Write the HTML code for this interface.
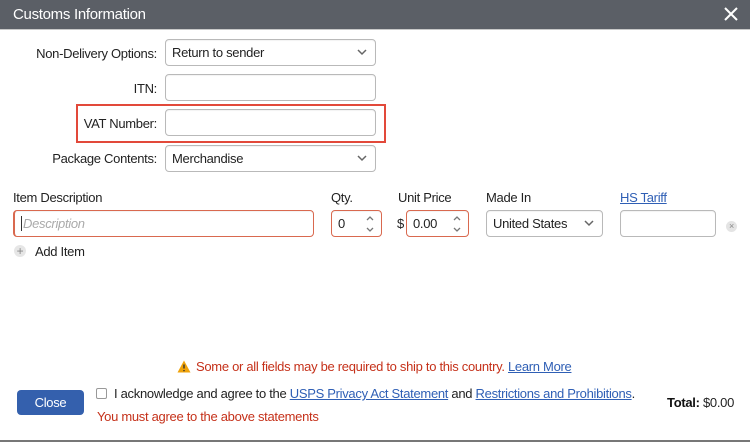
<!DOCTYPE html>
<html><head><style>
*{box-sizing:border-box;margin:0;padding:0}
body{width:750px;height:442px;background:#fff;font-family:"Liberation Sans",sans-serif;color:#222;position:relative;overflow:hidden;font-size:13px;letter-spacing:-0.3px}
.a{position:absolute;white-space:nowrap}
.hdr{left:0;top:0;width:750px;height:30px;background:#5b5f66;border-bottom:1px solid #c8c8c8}
.in{position:absolute;border:1px solid #b9b9b9;border-radius:4px;background:#fff;height:27px;font-size:13px;line-height:25px;padding-left:6px;box-shadow:inset 0 1px 1px rgba(0,0,0,.05)}
.err{border-color:#d9694f}
.lbl{position:absolute;text-align:right;width:157px;left:0;font-size:13px}
.chev{position:absolute;right:8px;top:9px}
.link{color:#2f5fb5;text-decoration:underline}
.red{color:#c5311a}
</style></head><body>
<div class="a hdr"></div>
<div class="a" style="left:13px;top:6px;color:#fff;font-size:15px">Customs Information</div>
<svg class="a" style="left:723px;top:6px" width="16" height="16" viewBox="0 0 16 16"><path d="M2 2L14 14M14 2L2 14" stroke="#fff" stroke-width="2"/></svg>

<div class="lbl" style="top:46px">Non-Delivery Options:</div>
<div class="in" style="left:165px;top:39px;width:211px">Return to sender<svg class="chev" width="10" height="7" viewBox="0 0 10 7"><path d="M1 1L5 5L9 1" stroke="#666" stroke-width="1.5" fill="none"/></svg></div>
<div class="lbl" style="top:81px">ITN:</div>
<div class="in" style="left:165px;top:74px;width:211px"></div>
<div class="a" style="left:76px;top:104px;width:310px;height:39px;border:2px solid #e2493a"></div>
<div class="lbl" style="top:116px">VAT Number:</div>
<div class="in" style="left:165px;top:109px;width:211px"></div>
<div class="lbl" style="top:151px">Package Contents:</div>
<div class="in" style="left:165px;top:145px;width:211px">Merchandise<svg class="chev" width="10" height="7" viewBox="0 0 10 7"><path d="M1 1L5 5L9 1" stroke="#666" stroke-width="1.5" fill="none"/></svg></div>

<div class="a" style="left:13px;top:190px">Item Description</div>
<div class="a" style="left:331px;top:190px">Qty.</div>
<div class="a" style="left:398px;top:190px">Unit Price</div>
<div class="a" style="left:486px;top:190px">Made In</div>
<div class="a link" style="left:620px;top:190px">HS Tariff</div>

<div class="in err" style="left:13px;top:210px;width:301px;color:#aaa;font-style:italic;border-left:2px solid #d9694f"><span style="border-left:1px solid #333;padding-left:1px">Description</span></div>
<div class="in err" style="left:331px;top:210px;width:51px">0<svg class="a" style="right:7px;top:4px" width="8" height="18" viewBox="0 0 8 18"><path d="M1 5L4 2L7 5M1 13L4 16L7 13" stroke="#777" stroke-width="1.3" fill="none"/></svg></div>
<div class="a" style="left:397px;top:216px">$</div>
<div class="in err" style="left:406px;top:210px;width:63px">0.00<svg class="a" style="right:7px;top:4px" width="8" height="18" viewBox="0 0 8 18"><path d="M1 5L4 2L7 5M1 13L4 16L7 13" stroke="#777" stroke-width="1.3" fill="none"/></svg></div>
<div class="in" style="left:486px;top:210px;width:117px">United States<svg class="chev" width="10" height="7" viewBox="0 0 10 7"><path d="M1 1L5 5L9 1" stroke="#666" stroke-width="1.5" fill="none"/></svg></div>
<div class="in" style="left:620px;top:210px;width:96px"></div>
<div class="a" style="left:726px;top:221px;width:11px;height:11px;border-radius:50%;background:#e4e4e4;color:#888;font-size:9px;line-height:11px;text-align:center">×</div>

<div class="a" style="left:14px;top:245px;width:12px;height:12px;border-radius:50%;background:#e6e6e6;color:#888;font-size:12px;line-height:12px;text-align:center">+</div>
<div class="a" style="left:35px;top:244px">Add Item</div>

<svg class="a" style="left:177px;top:360px" width="14" height="13" viewBox="0 0 14 13"><path d="M7 0.5L13.5 12.5H0.5Z" fill="#f0a30a"/><path d="M7 4.5V8.5M7 10v1.2" stroke="#333" stroke-width="1.4"/></svg>
<div class="a red" style="left:196px;top:359px">Some or all fields may be required to ship to this country. <span class="link">Learn More</span></div>

<div class="a" style="left:17px;top:390px;width:67px;height:25px;background:#3460ad;border-radius:4px;color:#fff;text-align:center;line-height:25px">Close</div>
<div class="a" style="left:96px;top:388px;width:11px;height:11px;border:1px solid #999;border-radius:2px"></div>
<div class="a" style="left:114px;top:386px">I acknowledge and agree to the <span class="link">USPS Privacy Act Statement</span> and <span class="link">Restrictions and Prohibitions</span>.</div>
<div class="a red" style="left:97px;top:409px">You must agree to the above statements</div>
<div class="a" style="right:16px;top:395px"><b style="color:#111">Total:</b> $0.00</div>
<div class="a" style="left:0;top:440px;width:750px;height:2px;background:#777"></div>
</body></html>
